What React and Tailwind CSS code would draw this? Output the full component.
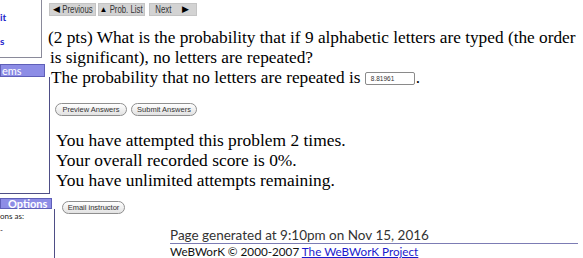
import React from "react";

const serif = { fontFamily: '"Liberation Serif", "Times New Roman", serif' };

const NavButton = ({ children, className = "" }) => (
  <div
    className={`h-[13px] bg-[#d3d3d3] border border-[#c4c4c4] flex items-center justify-center gap-[2px] text-[10px] leading-none text-[#333] whitespace-nowrap overflow-hidden ${className}`}
  >
    {children}
  </div>
);

const Narrow = ({ children }) => (
  <span className="inline-block scale-x-[0.78] -mx-[4px]">{children}</span>
);

const PillButton = ({ label, className = "" }) => (
  <div
    className={`h-[13px] rounded-full border border-[#8f8f8f] bg-gradient-to-b from-white to-[#e2e2e2] flex items-center justify-center text-[7.5px] leading-none text-[#333] whitespace-nowrap ${className}`}
  >
    {label}
  </div>
);

const Sidebar = () => (
  <div className="w-[44px] shrink-0 flex flex-col text-[#22c] font-['Lato','Liberation_Sans',sans-serif]">
    <div className="w-[42px] h-[58px] border-r border-b border-[#8a8a9a] bg-white">
      <div className="pt-[12px] text-[10px] font-bold leading-none">it</div>
      <div className="pt-[14px] text-[10px] font-bold leading-none">s</div>
    </div>
    <div className="mt-[6px] w-[45px] h-[13px] bg-[#8d8de6] border border-[#5f5fb8] text-white text-[11px] leading-[11px] pl-[1px]">
      ems
    </div>
    <div className="w-[50px] h-[117px] border-r border-b border-[#4e4e86]" />
    <div className="mt-[4px] w-[52px] h-[11px] bg-[#8d8de6] border border-[#5f5fb8] text-white text-[11px] font-bold leading-[9px] pl-[7px]">
      Options
    </div>
    <div className="w-[55px] flex-1 border-r border-[#4e4e86] text-[#222]">
      <div className="pt-[3px] text-[8px] leading-none">ons as:</div>
      <div className="pt-[6px] text-[8px] leading-none">-</div>
    </div>
  </div>
);

export default function App() {
  return (
    <div className="w-[583px] h-[258px] overflow-hidden bg-white flex">
      <Sidebar />
      <div className="flex-1 flex flex-col font-['Liberation_Sans',sans-serif]">
        <div className="mt-[3px] ml-[5px] flex gap-[2px]">
          <NavButton className="w-[47px]">
            <span className="text-[9px] text-black">◀</span>
            <Narrow>Previous</Narrow>
          </NavButton>
          <NavButton className="w-[47px]">
            <span className="text-[8px] text-black">▲</span>
            <Narrow>Prob. List</Narrow>
          </NavButton>
          <NavButton className="w-[48px] ml-[2px] gap-[12px]">
            <Narrow>Next</Narrow>
            <span className="text-[9px] text-black">▶</span>
          </NavButton>
        </div>

        <div style={serif} className="mt-[12px] ml-[4px] text-[17.3px] leading-[20px] text-black whitespace-nowrap">
          <div>
            (2 pts) What is the probability that if 9 alphabetic letters are typed (the order
          </div>
          <div className="ml-[2px]">is significant), no letters are repeated?</div>
          <div className="ml-[3px] flex items-center">
            <span>The probability that no letters are repeated is&nbsp;</span>
            <span className="w-[50px] h-[13px] border border-[#8a8a8a] rounded-[2px] font-['Liberation_Sans',sans-serif] text-[6.5px] leading-[11px] pl-[5px] text-[#333]">
              8.81961
            </span>
            <span className="ml-[1px]">.</span>
          </div>
        </div>

        <div className="mt-[15px] ml-[11px] flex gap-[4px]">
          <PillButton label="Preview Answers" className="w-[72px]" />
          <PillButton label="Submit Answers" className="w-[66px]" />
        </div>

        <div style={serif} className="mt-[14px] ml-[12px] text-[17.4px] leading-[20px] text-black whitespace-nowrap">
          <div>You have attempted this problem 2 times.</div>
          <div>Your overall recorded score is 0%.</div>
          <div>You have unlimited attempts remaining.</div>
        </div>

        <div className="mt-[11px] ml-[18px] flex">
          <PillButton label="Email instructor" className="w-[63px]" />
        </div>

        <div className="mt-[15px] ml-[126px] mr-[5px] font-['Lato',sans-serif] whitespace-nowrap">
          <div className="border-b border-[#7c7cb4] text-[13.5px] leading-[13px] pb-[1px] text-[#333]">
            Page generated at 9:10pm on Nov 15, 2016
          </div>
          <div className="pt-[1px] text-[11.7px] leading-[13px] text-[#111]">
            WeBWorK © 2000-2007{" "}
            <span className="text-[#1a1acc] underline">The WeBWorK Project</span>
          </div>
        </div>
      </div>
    </div>
  );
}
